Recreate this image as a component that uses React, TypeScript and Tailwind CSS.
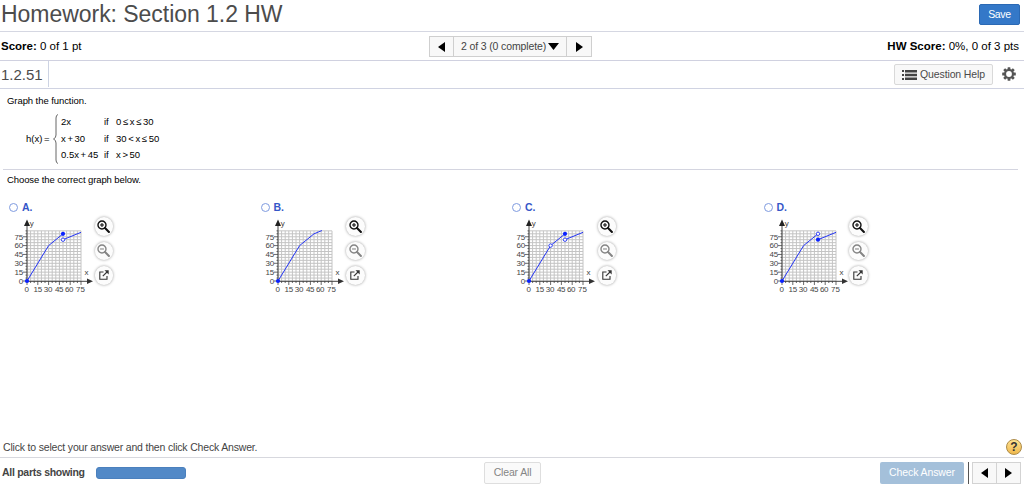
import { useState } from "react";

const X0 = 21;
const Y0 = 64;
const px = (v) => X0 + v * 0.72;
const py = (v) => Y0 - v * 0.59;

const choices = [
  {
    id: "A",
    lines: [[[0, 0], [30, 60], [50, 80]], [[50, 70], [75, 82.5]]],
    closed: [[0, 0], [50, 80]],
    open: [[50, 70]],
  },
  {
    id: "B",
    lines: [[[0, 0], [30, 60], [50, 80], [61, 85.5]]],
    closed: [[0, 0]],
    open: [],
  },
  {
    id: "C",
    lines: [[[0, 0], [30, 60], [50, 80]], [[50, 70], [75, 82.5]]],
    closed: [[0, 0], [50, 80]],
    open: [[30, 60], [50, 70]],
  },
  {
    id: "D",
    lines: [[[0, 0], [30, 60], [50, 80]], [[50, 70], [75, 82.5]]],
    closed: [[0, 0], [50, 70]],
    open: [[50, 80]],
  },
];

const xLabels = [
  { x: 18.5, t: "0", w: 4.5 },
  { x: 27.5, t: "15 30", w: 19 },
  { x: 49, t: "45 60", w: 18.5 },
  { x: 70, t: "75", w: 9 },
];

function Graph({ choice }) {
  const cols = Array.from({ length: 16 }, (_, i) => i * 5);
  const rows = Array.from({ length: 18 }, (_, i) => i * 5);
  return (
    <svg width="88" height="80" viewBox="0 0 88 80" className="block">
      <g stroke="#c4c4c4" strokeWidth="1">
        {cols.map((c) => (
          <line key={c} x1={px(c)} x2={px(c)} y1={py(85)} y2={Y0} />
        ))}
        {rows.map((r) => (
          <line key={r} x1={X0} x2={px(75)} y1={py(r)} y2={py(r)} />
        ))}
      </g>
      <g stroke="#444" strokeWidth="1">
        <line x1={X0} x2={X0} y1="7" y2={Y0 + 1} />
        <line x1={X0 - 1} x2="82" y1={Y0 + 0.3} y2={Y0 + 0.3} />
        {cols.map((c) => (
          <line key={c} x1={px(c)} x2={px(c)} y1={Y0} y2={c % 15 ? Y0 + 2 : Y0 + 4} strokeWidth="0.8" />
        ))}
        {rows.map((r) => (
          <line key={r} x1={r % 15 ? X0 - 1.5 : X0 - 4} x2={X0} y1={py(r)} y2={py(r)} strokeWidth="0.8" />
        ))}
      </g>
      <path d={`M${X0} 2.5l3 6.5h-6z`} fill="#222" />
      <path d={`M87 ${Y0 + 0.3}l-6-2.800v5.600z`} fill="#333" />
      <g fill="#444" fontSize="8" fontFamily="'Liberation Sans', Arial, sans-serif">
        {[0, 15, 30, 45, 60, 75].map((v) => (
          <text key={v} x="17.300" y={py(v) + 2.8} textAnchor="end">
            {v}
          </text>
        ))}
        {xLabels.map((l) => (
          <text key={l.t} x={l.x} y="74.500" textLength={l.w}>
            {l.t}
          </text>
        ))}
        <text x="23.800" y="8.500">y</text>
        <text x="78.500" y="58">x</text>
      </g>
      <g fill="none" stroke="#2435f5" strokeWidth="1">
        {choice.lines.map((l, i) => (
          <polyline key={i} points={l.map(([a, b]) => `${px(a)},${py(b)}`).join(" ")} />
        ))}
      </g>
      {choice.closed.map(([a, b]) => (
        <circle key={`${a}-${b}`} cx={px(a)} cy={py(b)} r="2.100" fill="#0a22ff" />
      ))}
      {choice.open.map(([a, b]) => (
        <circle key={`${a}-${b}`} cx={px(a)} cy={py(b)} r="1.700" fill="#fff" stroke="#2435f5" strokeWidth="0.9" />
      ))}
    </svg>
  );
}

function Magnifier({ plus = false }) {
  return (
    <svg width="13" height="13" viewBox="0 0 12 12" fill="none" stroke={plus ? "#111" : "#858585"}>
      <circle cx="4.600" cy="4.600" r="3.700" strokeWidth="1.300" />
      <path d="M2.800 4.600h3.600" strokeWidth="1" />
      {plus && <path d="M4.600 2.800v3.600" strokeWidth="1" />}
      <path d="M7.400 7.400l3.600 3.600" strokeWidth="1.900" strokeLinecap="round" />
    </svg>
  );
}

function PopOut() {
  return (
    <svg width="10" height="10" viewBox="0 0 10 10" fill="none" stroke="#333" strokeWidth="1.100">
      <path d="M4.500 2H0.800v7.300H8V6" />
      <path d="M3.800 6.200L8 2" />
      <path d="M5.500 0.300h4.200v4.200z" fill="#333" stroke="none" />
    </svg>
  );
}

function Arrow({ left = false }) {
  return (
    <svg width="7" height="10" viewBox="0 0 7 10">
      <path d={left ? "M7 0v10L0 5z" : "M0 0v10l7-5z"} fill="#000" />
    </svg>
  );
}

function Choice({ choice, selected, onSelect }) {
  return (
    <div className="w-[251.5px] shrink-0">
      <div className="flex items-center h-3 pl-[9px]" onClick={onSelect}>
        <span className="w-[9px] h-[9px] rounded-full border border-[#7f9be0] bg-white flex items-center justify-center">
          {selected && <span className="w-1 h-1 rounded-full bg-[#3556c8]" />}
        </span>
        <span className="ml-1 text-[10.5px] leading-3 font-bold text-[#3556c8]">{choice.id}.</span>
      </div>
      <div className="flex">
        <div className={choice.id === "A" || choice.id === "D" ? "w-[94.500px] pl-[6px] mt-1" : "w-[94.500px] pl-[5px] mt-1"}>
          <Graph choice={choice} />
        </div>
        <div className="flex flex-col gap-[6px] pt-1">
          {[<Magnifier key="in" plus />, <Magnifier key="out" />, <PopOut key="open" />].map((icon, i) => (
            <button
              key={i}
              className="w-[18.5px] h-[18.500px] rounded-full bg-[#fcfcfc] shadow-[0_0_3px_rgba(0,0,0,0.4)] flex items-center justify-center"
            >
              {icon}
            </button>
          ))}
        </div>
      </div>
    </div>
  );
}

const pieces = [
  ["2x", "0 ≤ x ≤ 30"],
  ["x + 30", "30 < x ≤ 50"],
  ["0.5x + 45", "x > 50"],
];

export default function App() {
  const [selected, setSelected] = useState("");

  return (
    <div className="w-[1024px] h-[486px] bg-white overflow-hidden flex flex-col text-black font-['Liberation_Sans',Arial,sans-serif]">
      <header className="h-8 shrink-0 border-b border-[#d5d7e2] flex justify-between">
        <h1 className="pl-px text-[23px] tracking-[-0.04px] leading-[29px] text-[#4c4c4c] whitespace-nowrap">
          Homework: Section 1.2 HW
        </h1>
        <button className="mt-1 mr-1 w-[41px] h-[21px] rounded-[2px] bg-[#3478c8] border border-[#2b69b4] text-white text-[10.5px] tracking-[-0.3px] leading-none">
          Save
        </button>
      </header>

      <div className="h-[29px] shrink-0 border-b border-[#d0d1e0] grid grid-cols-[429px_163px_1fr]">
        <p className="pl-px leading-[29px] text-[11.5px]">
          <b>Score:</b> 0 of 1 pt
        </p>
        <div className="mt-1 h-[21px] flex border border-[#cfcfcf] bg-[#f8f8f8]">
          <button className="w-6 border-r border-[#cfcfcf] flex items-center justify-center">
            <Arrow left />
          </button>
          <button className="flex-1 border-r border-[#cfcfcf] flex items-center justify-center gap-[2px] text-[10.500px] tracking-[-0.13px] text-[#444] whitespace-nowrap">
            2 of 3 (0 complete)
            <svg width="11" height="7" viewBox="0 0 11 7">
              <path d="M0 0h11L5.500 7z" fill="#000" />
            </svg>
          </button>
          <button className="w-6 flex items-center justify-center">
            <Arrow />
          </button>
        </div>
        <p className="pr-[5px] text-right leading-[29px] text-[11.5px]">
          <b>HW Score:</b> 0%, 0 of 3 pts
        </p>
      </div>

      <div className="h-7 shrink-0 border-b border-[#d0d3e2] flex justify-between">
        <div className="w-[49px] h-[26px] border-r border-[#cdd3e3] pl-px text-[15px] leading-[27px] text-[#4c4c4c]">1.2.51</div>
        <div className="flex items-start pt-[3px] pr-2">
          <button className="w-[99px] h-[21px] border border-[#d9d9d9] rounded-[2px] bg-[#f8f8f8] flex items-center justify-center gap-[3px] text-[10.500px] tracking-[-0.13px] text-[#4a4a4a] whitespace-nowrap">
            <svg width="15" height="10" viewBox="0 0 15 10" fill="#444">
              <path d="M0 0h2v2H0zM3 0h12v2.500H3zM0 4h2v2H0zM3 3.800h12v2.500H3zM0 8h2v2H0zM3 7.500h12V10H3z" />
            </svg>
            Question Help
          </button>
          <svg width="14" height="14" viewBox="0 0 14 14" className="ml-[9px] mt-[3px]">
            <g fill="#555">
              {[0, 45, 90, 135].map((a) => (
                <rect key={a} x="5.600" y="0.200" width="2.800" height="13.600" rx="0.500" transform={`rotate(${a} 7 7)`} />
              ))}
              <circle cx="7" cy="7" r="5" />
            </g>
            <circle cx="7" cy="7" r="2.900" fill="#fff" />
          </svg>
        </div>
      </div>

      <main className="flex-1 flex flex-col text-[9.5px]">
        <section className="ml-[3px] mr-[6px] h-[81px] border-b border-[#d4d5e0]">
          <p className="ml-1 pt-[6px] leading-3 tracking-[-0.07px]">Graph the function.</p>
          <div className="flex items-center h-[50px] mt-[7px] ml-[23px] whitespace-nowrap [word-spacing:-1px]">
            <span className="w-[27px]">h(x) =</span>
            <svg width="6" height="50" viewBox="0 0 6 50" fill="none" stroke="#555" strokeWidth="0.9">
              <path d="M5 0.500Q3 1 3 4v17q0 3-2.500 4Q3 26 3 29v17q0 3 2 3.500" />
            </svg>
            <div className="ml-[2px] grid grid-cols-[43px_12px_auto] auto-rows-[16.5px] leading-[16.500px]">
              {pieces.map(([value, range]) => (
                <div key={value} className="contents">
                  <span>{value}</span>
                  <span>if</span>
                  <span>{range}</span>
                </div>
              ))}
            </div>
          </div>
        </section>

        <p className="ml-[7px] mt-[4px] leading-3 tracking-[-0.1px]">Choose the correct graph below.</p>
        <div className="flex mt-[15px]">
          {choices.map((choice) => (
            <Choice
              key={choice.id}
              choice={choice}
              selected={selected === choice.id}
              onSelect={() => setSelected(choice.id)}
            />
          ))}
        </div>

        <div className="mt-auto h-[19px] pl-[3px] pr-[2px] flex justify-between text-[#444]">
          <p className="leading-[18px] text-[10.500px] tracking-[-0.18px]">
            Click to select your answer and then click Check Answer.
          </p>
          <span className="mt-px w-4 h-4 rounded-full border border-[#ad8b47] bg-linear-to-b from-[#ffe28e] to-[#efb84c] text-[12px] leading-[14px] text-center font-bold text-[#333]">
            ?
          </span>
        </div>
      </main>

      <footer className="h-[29px] shrink-0 border-t border-[#d7d8de] flex">
        <b className="ml-[2px] w-[94px] text-[10.500px] tracking-[-0.28px] leading-7 text-[#444]">All parts showing</b>
        <div className="mt-[9px] w-[90px] h-[12px] rounded-[3px] bg-[#5289c7] border border-[#4b80bd]" />
        <button className="ml-[298px] mt-1 w-[57px] h-[22px] border border-[#dedede] rounded-[2px] bg-[#fafafa] text-[10.500px] tracking-[-0.15px] text-[#858585]">
          Clear All
        </button>
        <button className="ml-auto mt-1 w-[84px] h-[22px] rounded-[2px] bg-[#a4c0da] text-[10.500px] tracking-[-0.1px] text-white">
          Check Answer
        </button>
        <div className="ml-[4px] mt-1 w-px h-[22px] bg-[#555]" />
        <div className="ml-[3px] mr-[3px] mt-1 w-[49px] h-[22px] flex border border-[#d3d3d3] bg-[#f8f8f8]">
          <button className="flex-1 border-r border-[#d3d3d3] flex items-center justify-center">
            <Arrow left />
          </button>
          <button className="flex-1 flex items-center justify-center">
            <Arrow />
          </button>
        </div>
      </footer>
    </div>
  );
}
